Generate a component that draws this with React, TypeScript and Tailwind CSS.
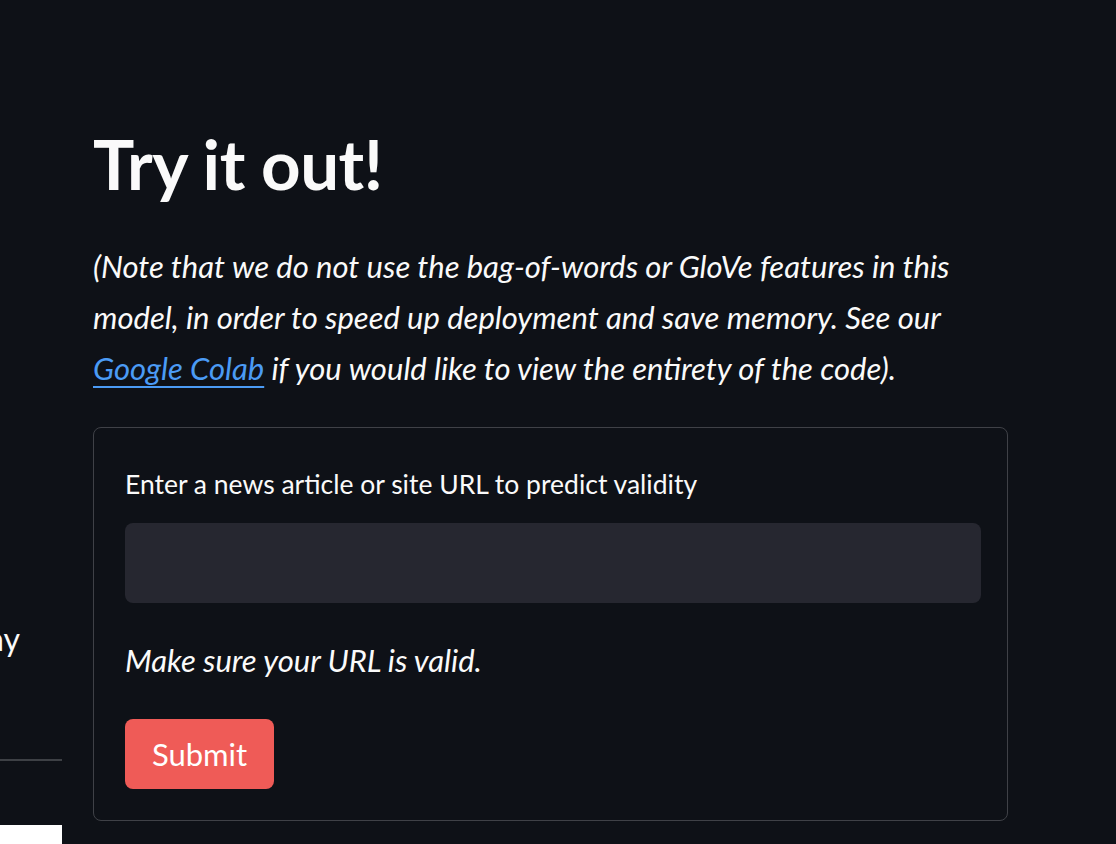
import React from "react";

export default function App() {
  const font = { fontFamily: "Lato, 'Noto Sans', sans-serif" };
  return (
    <div
      className="w-[1116px] h-[844px] overflow-hidden bg-[#0e1117] text-[#fafafa] flex gap-[31px]"
      style={font}
    >
      {/* left column (clipped) */}
      <div className="w-[62px] shrink-0 flex flex-col overflow-hidden">
        <div className="h-[613px] shrink-0" />
        <div className="shrink-0 text-[32px] leading-[51px] whitespace-nowrap -ml-[12px]">ay</div>
        <div className="h-[95px] shrink-0" />
        <div className="h-[2px] shrink-0 bg-[#3d4045]" />
        <div className="h-[64px] shrink-0" />
        <div className="h-[40px] shrink-0 bg-white" />
      </div>

      {/* main column */}
      <div className="w-[915px] shrink-0 flex flex-col pt-[122px]">
        <h2 className="text-[69px] leading-[84px] font-bold tracking-[-0.5px]">Try it out!</h2>
        <p className="mt-[35px] text-[31px] leading-[51px] italic whitespace-nowrap">
          (Note that we do not use the bag-of-words or GloVe features in this
          <br />
          model, in order to speed up deployment and save memory. See our
          <br />
          <a className="text-[#4b9bf5] underline underline-offset-[6px] decoration-2">Google Colab</a> if you would
          like to view the entirety of the code).
        </p>
        <div className="mt-[33px] h-[394px] border border-[#3f4147] rounded-[8px] pl-[31px] pt-[34px] flex flex-col">
          <label className="text-[26.5px] leading-[45px]">
            Enter a news article or site URL to predict validity
          </label>
          <div className="mt-[16px] h-[80px] w-[856px] bg-[#262730] rounded-[8px]" />
          <p className="mt-[32px] text-[31px] leading-[51px] italic">Make sure your URL is valid.</p>
          <div className="mt-[33px]">
            <button className="h-[70px] w-[149px] rounded-[8px] bg-[#ef5b57] text-white text-[31px] leading-none">
              Submit
            </button>
          </div>
        </div>
      </div>
    </div>
  );
}
